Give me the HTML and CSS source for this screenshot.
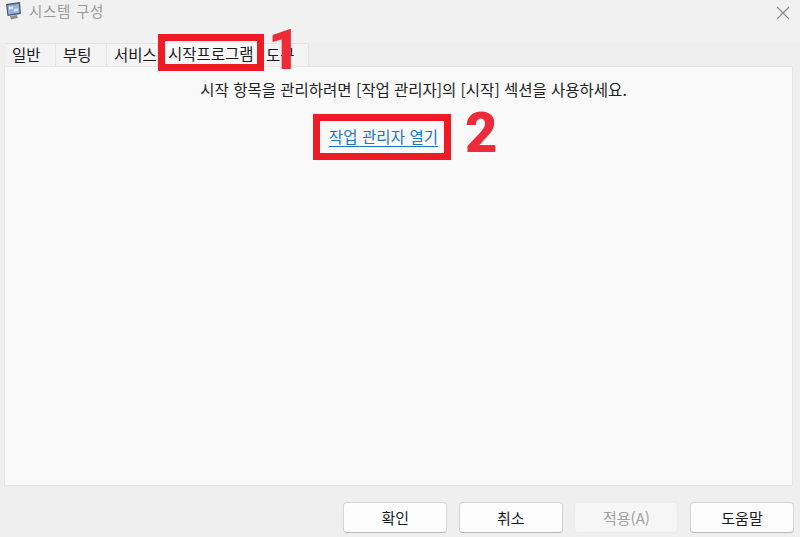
FILE: index.html
```html
<!DOCTYPE html>
<html lang="ko">
<head>
    <meta charset="UTF-8">
    <title>시스템 구성</title>
    <link rel="stylesheet" href="styles.css">
</head>
<body>

<div class="window">
    <!-- Title bar -->
    <div class="titlebar">
        <svg class="app-icon" width="18" height="20" viewBox="0 0 18 20">
            <path d="M1 3 L15 1 L16 13 L2.500 15 Z" fill="#4f5a6a"/>
            <path d="M2.500 4.300 L13.800 2.800 L14.600 11.800 L3.400 13.400 Z" fill="#8fb4e8"/>
            <path d="M4 6 L8 5.400 L8.200 8 L4.200 8.500 Z" fill="#e6eefa"/>
            <path d="M9 8 L13 7.400 L13.200 10 L9.200 10.500 Z" fill="#dfe9f8"/>
            <path d="M5 15 L12 14 L13 17 L6 18.500 Z" fill="#8b8f96"/>
        </svg>
        <span class="title">시스템 구성</span>
        <svg class="close" width="14" height="14" viewBox="0 0 14 14">
            <path d="M1 1 L13 13 M13 1 L1 13" stroke="#8a8a8a" stroke-width="1.1" fill="none"/>
        </svg>
    </div>

    <!-- Tabs -->
    <div class="tabs">
        <div class="tab tab-general">일반</div>
        <div class="tab tab-boot">부팅</div>
        <div class="tab tab-service">서비스</div>
        <div class="tab tab-startup active">시작프로그램</div>
        <div class="tab tab-tools">도구</div>
    </div>

    <!-- Panel -->
    <div class="panel">
        <p class="message">시작 항목을 관리하려면 [작업 관리자]의 [시작] 섹션을 사용하세요.</p>
        <a class="link" href="#">작업 관리자 열기</a>
    </div>

    <!-- Buttons -->
    <div class="footer">
        <button class="button">확인</button>
        <button class="button">취소</button>
        <button class="button" disabled>적용(A)</button>
        <button class="button">도움말</button>
    </div>

    <!-- Red annotations over the screenshot -->
    <div class="mark mark-tab"></div>
    <div class="number number-1">1</div>
    <div class="mark mark-link"></div>
    <div class="number number-2">2</div>
</div>

</body>
</html>
```

FILE: styles.css
```css
* {
    box-sizing: border-box;
    margin: 0;
    padding: 0;
}
body {
    font-family: "Noto Sans CJK KR", "Noto Sans", sans-serif;
    background-color: #efefef;
    color: #1a1a1a;
    overflow: hidden;
}
.window {
    position: relative;
    width: 800px;
    height: 537px;
    background-color: #efefef;
    display: flex;
    flex-direction: column;
}

/* Title bar */
.titlebar {
    height: 43px;
    padding: 0 10px 22px 5px;
    display: flex;
    align-items: center;
    background-color: #f1f1f1;
}
.app-icon {
    flex: none;
}
.title {
    margin-left: 6px;
    font-size: 14.5px;
    color: #9a9a9a;
    letter-spacing: 0.7px;
}
.close {
    margin-left: auto;
    margin-top: 4px;
}

/* Tabs */
.tabs {
    height: 23px;
    padding-left: 6px;
    display: flex;
    align-items: flex-end;
}
.tab {
    height: 23px;
    padding-left: 6px;
    font-size: 15.5px;
    line-height: 21px;
    background-color: #f3f3f3;
    border: 1px solid #e4e4e4;
    border-bottom: none;
    border-left: none;
    white-space: nowrap;
}
.tab-general {
    width: 50px;
}
.tab-boot {
    width: 51px;
    padding-left: 7px;
}
.tab-service {
    width: 51px;
    padding-left: 7px;
}
.tab-startup {
    width: 104px;
    padding-left: 10px;
}
.tab-tools {
    width: 47px;
    padding-left: 4px;
}
.tab.active {
    background-color: #f9f9f9;
    border: none;
}

/* Panel */
.panel {
    width: 789px;
    height: 420px;
    margin-left: 4px;
    padding-top: 11px;
    padding-left: 30px;
    background-color: #f9f9f9;
    border: 1px solid #e6e6e6;
    display: flex;
    flex-direction: column;
    align-items: center;
}
.message {
    font-size: 15.5px;
    line-height: 22px;
    color: #222;
}
.link {
    margin-top: 25px;
    margin-right: 60px;
    font-size: 15.5px;
    line-height: 22px;
    letter-spacing: 0.1px;
    color: #1a75c4;
    text-decoration: underline;
    text-underline-offset: 3px;
}

/* Bottom buttons */
.footer {
    padding: 16px 6px 0 0;
    display: flex;
    justify-content: flex-end;
    gap: 11.6px;
}
.button {
    width: 104px;
    height: 31px;
    font-family: inherit;
    font-size: 15px;
    color: #1a1a1a;
    background-color: #fdfdfd;
    border: 1px solid #d4d4d4;
    border-bottom-color: #b8b8b8;
    border-radius: 4px;
}
.button:disabled {
    color: #a0a0a0;
    background-color: #f6f6f6;
    border-color: #ececec;
}

/* Annotations */
.mark {
    position: absolute;
    border: 7px solid #ed1c24;
}
.mark-tab {
    left: 158px;
    top: 34px;
    width: 106px;
    height: 37px;
}
.mark-link {
    left: 313px;
    top: 114px;
    width: 138px;
    height: 46px;
}
.number {
    position: absolute;
    font-family: Roboto, Arial, sans-serif;
    font-weight: 900;
    color: #ee2b38;
}
.number-1 {
    left: 268px;
    top: 22px;
    font-size: 56px;
    line-height: 56px;
}
.number-2 {
    left: 465px;
    top: 105px;
    font-size: 56px;
    line-height: 57px;
}
```
